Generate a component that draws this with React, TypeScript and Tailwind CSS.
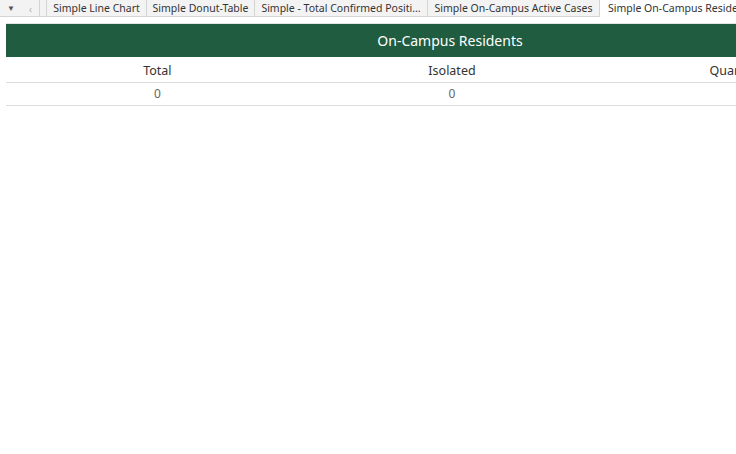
import React from 'react';

const tabs = [
  { label: 'Simple Line Chart', w: 'w-[100px]' },
  { label: 'Simple Donut-Table', w: 'w-[108px]' },
  { label: 'Simple - Total Confirmed Positi...', w: 'w-[173px]' },
  { label: 'Simple On-Campus Active Cases', w: 'w-[172px]' },
];

const columns = ['Total', 'Isolated', 'Quarantined'];

const App: React.FC = () => {
  return (
    <div className="w-[736px] h-[454px] overflow-hidden bg-white font-['Noto_Sans',sans-serif]">
      {/* sheet tabs */}
      <div className="flex h-[17px] bg-[#f3f3f3] border-b border-[#d4d4d4] text-[10.5px] text-[#333] leading-none">
        <div className="w-[22px] flex items-center justify-center text-[#555] text-[8px]">▼</div>
        <div className="w-[18px] flex items-center justify-center text-[#bbb] border-r border-[#d4d4d4] text-[11px]">‹</div>
        <div className="w-[7px] border-r border-[#d4d4d4]" />
        {tabs.map((t) => (
          <div
            key={t.label}
            className={`${t.w} shrink-0 flex items-center justify-center border-r border-[#d4d4d4] whitespace-nowrap`}
          >
            {t.label}
          </div>
        ))}
        <div className="flex-1 bg-white flex items-center pl-[8px] whitespace-nowrap overflow-hidden border-b border-white -mb-px">
          Simple On-Campus Residents
        </div>
      </div>

      {/* table */}
      <div className="mt-[6px] ml-[6px] w-[888px] border-t border-[#e4e4e4]">
        <div className="h-[33px] bg-[#1f5c40] flex items-center justify-center text-white text-[14px]">
          On-Campus Residents
        </div>
        <div className="grid grid-cols-3 pl-[4px] h-[26px] border-b border-[#dcdcdc] text-[12.5px] text-[#333] pt-[4px]">
          {columns.map((c) => (
            <div key={c} className="flex items-center justify-center">{c}</div>
          ))}
        </div>
        <div className="grid grid-cols-3 pl-[4px] h-[23px] border-b border-[#dcdcdc] text-[12px] text-[#666]">
          {columns.map((c) => (
            <div key={c} className="flex items-center justify-center">0</div>
          ))}
        </div>
      </div>
    </div>
  );
};

export default App;
